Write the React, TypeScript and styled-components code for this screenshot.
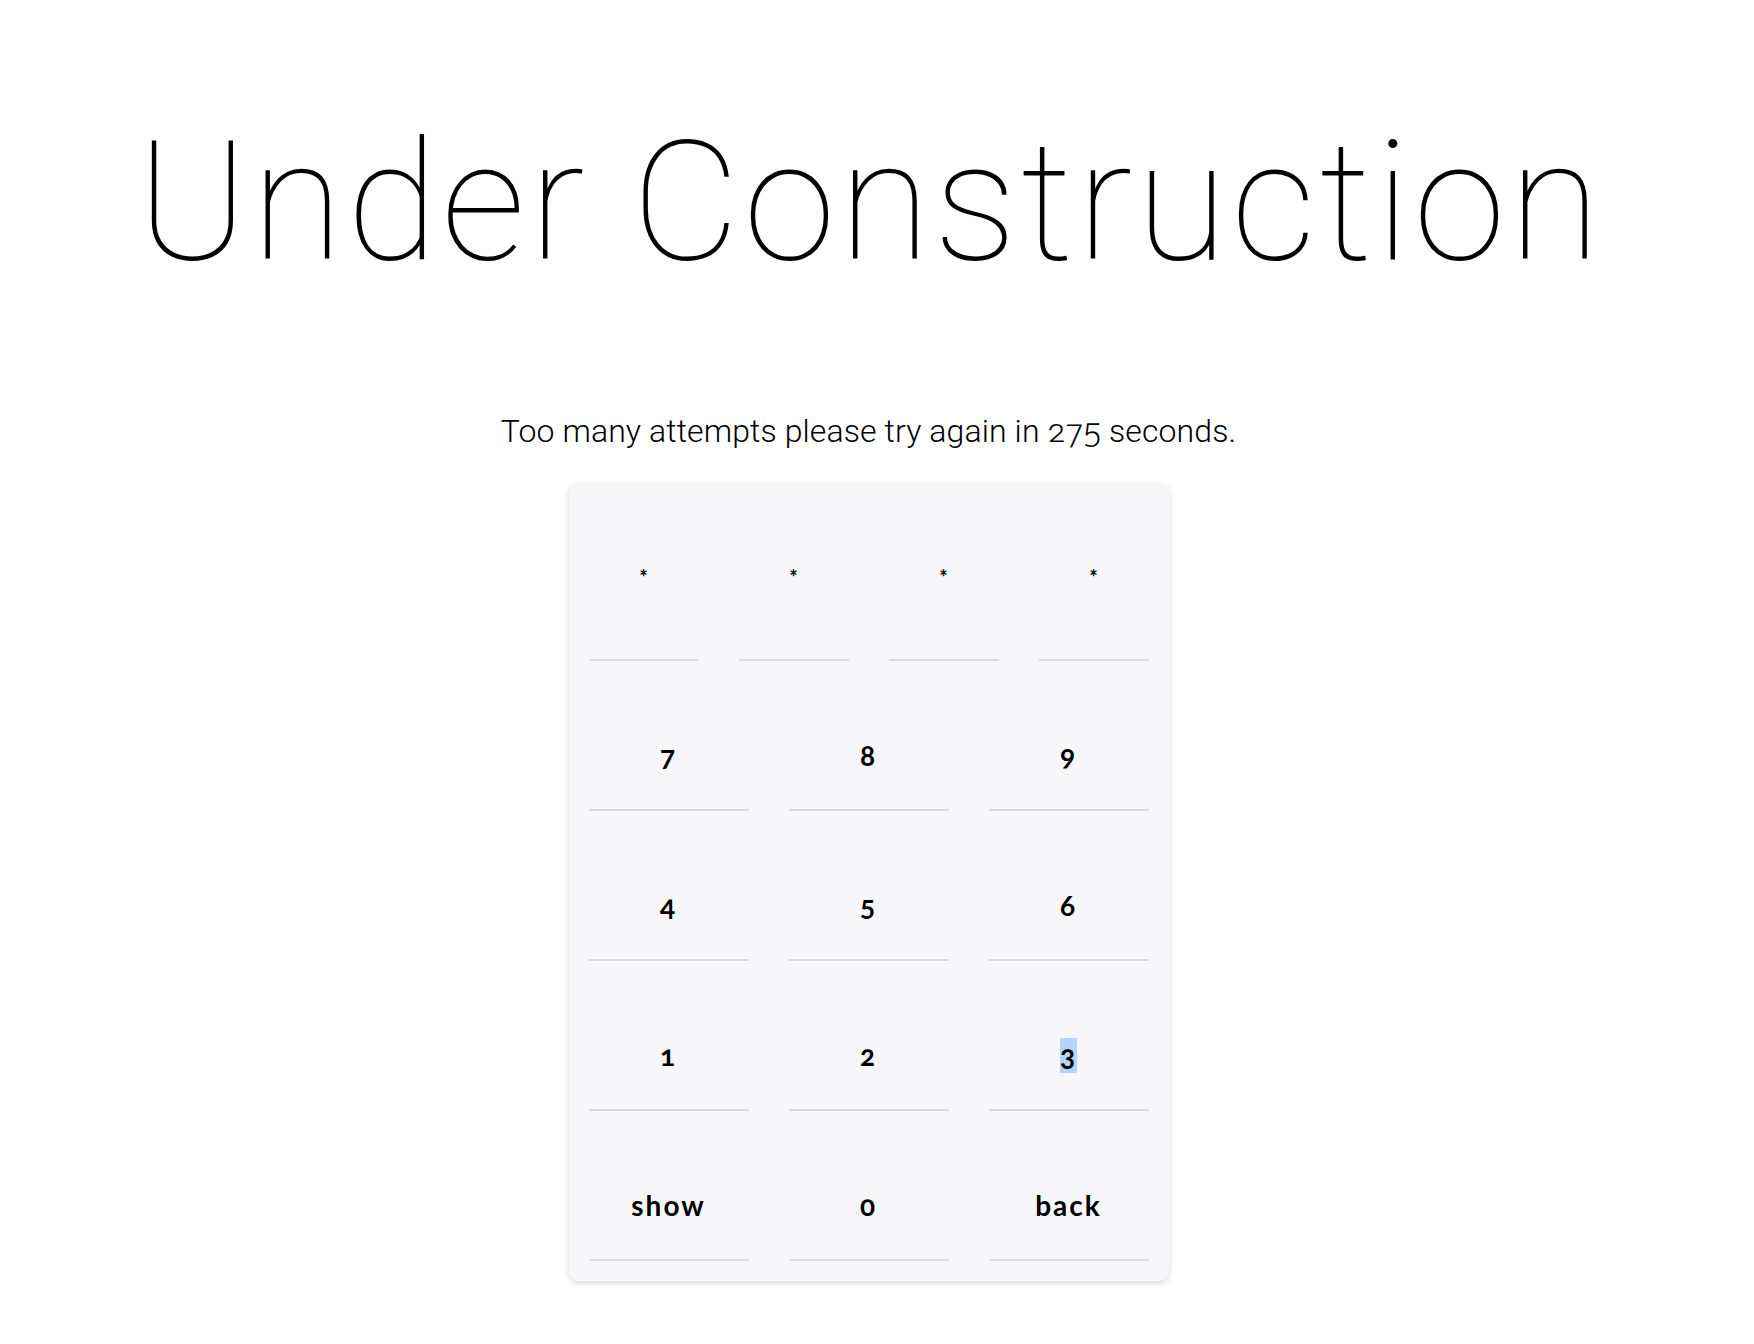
import styled, { createGlobalStyle } from 'styled-components';

const GlobalStyle = createGlobalStyle`
  body {
    margin: 0;
    background: #ffffff;
    color: #000000;
    font-family: Roboto, "Liberation Sans", sans-serif;
  }
`;

const Page = styled.div`
  padding: 102px 17px 60px 0;
  display: flex;
  flex-direction: column;
  align-items: center;
`;

const Title = styled.h1`
  margin: 0;
  padding-left: 3.5px;
  font-family: Roboto, "Liberation Sans", sans-serif;
  font-weight: 100;
  font-size: 167px;
  line-height: 200px;
  letter-spacing: 3.5px;
  white-space: nowrap;
  font-variant-ligatures: none;
`;

const Notice = styled.p`
  margin: 110px 0 0;
  font-family: Roboto, "Liberation Sans", sans-serif;
  font-weight: 300;
  font-size: 32px;
  line-height: 38px;
  letter-spacing: 0.1px;
  font-variant-numeric: oldstyle-nums;
`;

const Pad = styled.div`
  margin-top: 33px;
  width: 600px;
  box-sizing: border-box;
  padding: 20px;
  background: #f7f7f9;
  border-radius: 10px;
  box-shadow: 0 2px 6px rgba(0, 0, 0, 0.16);
  display: flex;
  flex-direction: column;
  gap: 40px;
`;

const Row = styled.div<{ $cols: number }>`
  display: grid;
  grid-template-columns: repeat(${p => p.$cols}, 1fr);
  column-gap: 40px;
`;

const Digit = styled.div`
  height: 158px;
  box-sizing: border-box;
  padding-bottom: 8px;
  border-bottom: 2px solid #dadadc;
  display: flex;
  align-items: center;
  justify-content: center;
  font-family: Lato, "Liberation Sans", sans-serif;
  font-weight: 700;
  font-size: 20px;
`;

const Key = styled.button`
  height: 110px;
  box-sizing: border-box;
  padding: 0;
  border: none;
  border-bottom: 2px solid #dadadc;
  background: transparent;
  display: flex;
  align-items: center;
  justify-content: center;
  font-family: Lato, "Liberation Sans", sans-serif;
  font-weight: 700;
  font-size: 28px;
  line-height: 35px;
  letter-spacing: 2px;
  color: #000;
  font-variant-numeric: oldstyle-nums;
  cursor: pointer;
`;

const Selected = styled.span`
  background: #b3d4fc;
`;

const rows = [
  ['7', '8', '9'],
  ['4', '5', '6'],
  ['1', '2', '3'],
  ['show', '0', 'back'],
];

export default function App() {
  return (
    <>
      <GlobalStyle />
      <Page>
        <Title>Under Construction</Title>
        <Notice>Too many attempts please try again in 275 seconds.</Notice>
        <Pad>
          <Row $cols={4}>
            {[0, 1, 2, 3].map(i => (
              <Digit key={i}>*</Digit>
            ))}
          </Row>
          {rows.map((row, r) => (
            <Row key={r} $cols={3}>
              {row.map(label => (
                <Key key={label}>
                  {label === '3' ? <Selected>{label}</Selected> : label}
                </Key>
              ))}
            </Row>
          ))}
        </Pad>
      </Page>
    </>
  );
}
